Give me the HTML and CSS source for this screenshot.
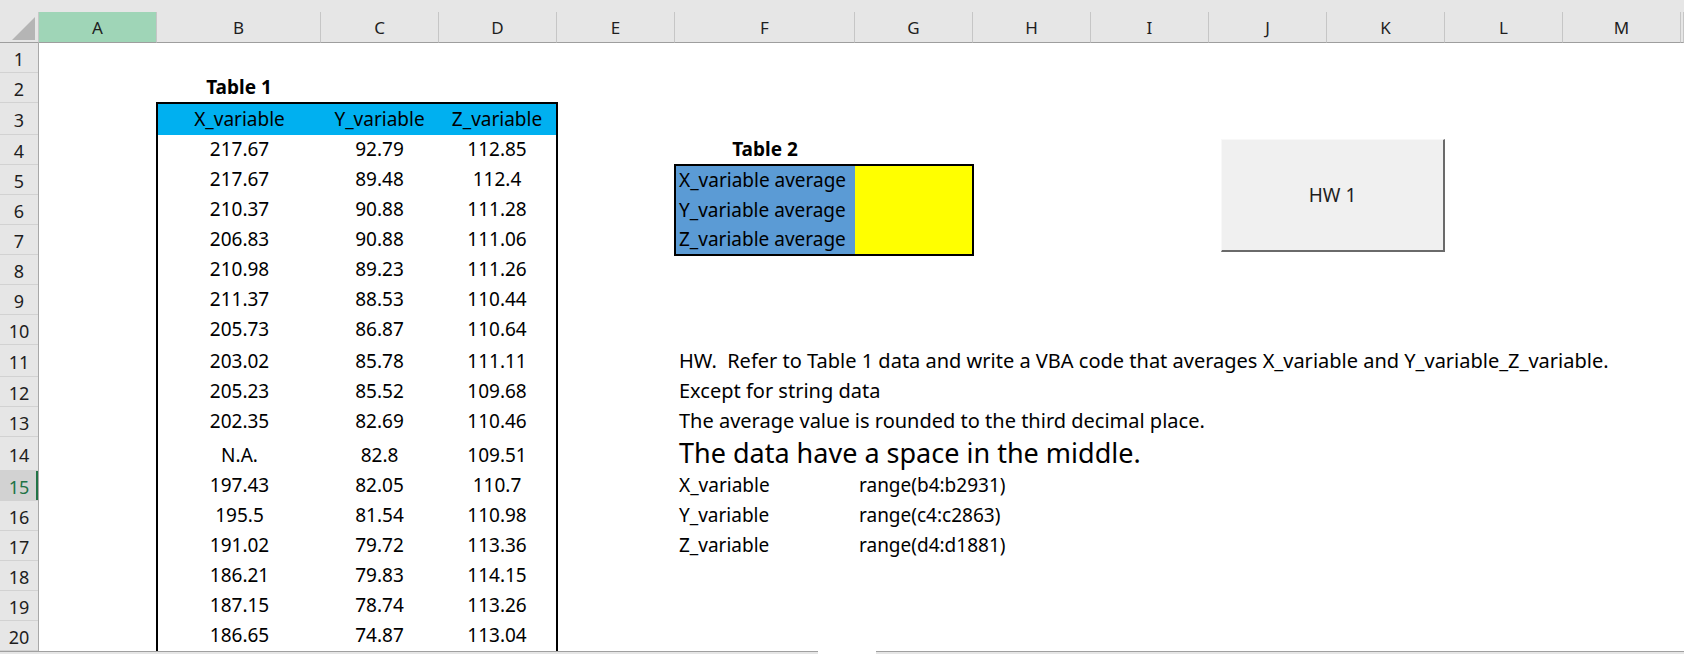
FILE: index.html
```html
<!DOCTYPE html>
<html>
<head>
<meta charset="utf-8">
<link rel="stylesheet" href="styles.css">
</head>
<body>
<div class="app">
  <div class="topband"></div>
  <div class="sheet">
    <div class="corner">
      <svg width="38" height="30" viewBox="0 0 38 30"><polygon points="12,28 35,5 35,28" fill="#b5b5b5"/></svg>
    </div>
    <div class="colheads">
      <div class="ch sel">A</div>
      <div class="ch">B</div>
      <div class="ch">C</div>
      <div class="ch">D</div>
      <div class="ch">E</div>
      <div class="ch">F</div>
      <div class="ch">G</div>
      <div class="ch">H</div>
      <div class="ch">I</div>
      <div class="ch">J</div>
      <div class="ch">K</div>
      <div class="ch">L</div>
      <div class="ch">M</div>
      <div class="ch"></div>
    </div>
    <div class="rowheads">
      <div class="rh">1</div>
      <div class="rh">2</div>
      <div class="rh">3</div>
      <div class="rh">4</div>
      <div class="rh">5</div>
      <div class="rh">6</div>
      <div class="rh">7</div>
      <div class="rh">8</div>
      <div class="rh">9</div>
      <div class="rh">10</div>
      <div class="rh">11</div>
      <div class="rh">12</div>
      <div class="rh">13</div>
      <div class="rh">14</div>
      <div class="rh sel">15</div>
      <div class="rh">16</div>
      <div class="rh">17</div>
      <div class="rh">18</div>
      <div class="rh">19</div>
      <div class="rh">20</div>
    </div>
    <div class="cells">
      <div class="txt bold center t1-title">Table 1</div>
      <div class="t1">
        <div class="txt center hd">X_variable</div><div class="txt center hd">Y_variable</div><div class="txt center hd">Z_variable</div>
        <div class="txt center">217.67</div><div class="txt center">92.79</div><div class="txt center">112.85</div>
        <div class="txt center">217.67</div><div class="txt center">89.48</div><div class="txt center">112.4</div>
        <div class="txt center">210.37</div><div class="txt center">90.88</div><div class="txt center">111.28</div>
        <div class="txt center">206.83</div><div class="txt center">90.88</div><div class="txt center">111.06</div>
        <div class="txt center">210.98</div><div class="txt center">89.23</div><div class="txt center">111.26</div>
        <div class="txt center">211.37</div><div class="txt center">88.53</div><div class="txt center">110.44</div>
        <div class="txt center">205.73</div><div class="txt center">86.87</div><div class="txt center">110.64</div>
        <div class="txt center">203.02</div><div class="txt center">85.78</div><div class="txt center">111.11</div>
        <div class="txt center">205.23</div><div class="txt center">85.52</div><div class="txt center">109.68</div>
        <div class="txt center">202.35</div><div class="txt center">82.69</div><div class="txt center">110.46</div>
        <div class="txt center">N.A.</div><div class="txt center">82.8</div><div class="txt center">109.51</div>
        <div class="txt center">197.43</div><div class="txt center">82.05</div><div class="txt center">110.7</div>
        <div class="txt center">195.5</div><div class="txt center">81.54</div><div class="txt center">110.98</div>
        <div class="txt center">191.02</div><div class="txt center">79.72</div><div class="txt center">113.36</div>
        <div class="txt center">186.21</div><div class="txt center">79.83</div><div class="txt center">114.15</div>
        <div class="txt center">187.15</div><div class="txt center">78.74</div><div class="txt center">113.26</div>
        <div class="txt center">186.65</div><div class="txt center">74.87</div><div class="txt center">113.04</div>
      </div>
      <div class="txt bold center t2-title">Table 2</div>
      <div class="t2">
        <div class="txt lbl">X_variable average</div><div class="val"></div>
        <div class="txt lbl">Y_variable average</div><div class="val"></div>
        <div class="txt lbl">Z_variable average</div><div class="val"></div>
      </div>
      <div class="txt note n11">HW.  Refer to Table 1 data and write a VBA code that averages X_variable and Y_variable_Z_variable.</div>
      <div class="txt note n12">Except for string data</div>
      <div class="txt note n13">The average value is rounded to the third decimal place.</div>
      <div class="txt note big n14">The data have a space in the middle.</div>
      <div class="txt var r15">X_variable</div><div class="txt rng r15">range(b4:b2931)</div>
      <div class="txt var r16">Y_variable</div><div class="txt rng r16">range(c4:c2863)</div>
      <div class="txt var r17">Z_variable</div><div class="txt rng r17">range(d4:d1881)</div>
      <div class="btn">HW 1</div>
    </div>
  </div>
  <div class="bottombar">
    <div class="seg seg1"></div>
    <div class="gap"></div>
    <div class="seg seg2"></div>
  </div>
</div>
</body>
</html>
```
FILE: styles.css
```css
:root {
  --cols: 118px 164px 118px 118px 118px 180px 118px 118px 118px 118px 118px 118px 118px 1fr;
  --rows: 30px 30px 32px repeat(7, 30px) 32px 30px 30px 34px repeat(6, 30px);
}
* { box-sizing: border-box; }
body {
  margin: 0;
  width: 1684px;
  height: 654px;
  overflow: hidden;
  background: #fff;
  font-family: "Noto Sans", "Liberation Sans", sans-serif;
  color: #000;
}
.topband { height: 12px; background: #e6e6e6; }
.sheet {
  display: grid;
  grid-template-columns: 39px 1fr;
  grid-template-rows: 31px 608px;
}
.corner {
  background: #e6e6e6;
  border-bottom: 1px solid #9e9e9e;
  border-right: 1px solid #c8c8c8;
}
.corner svg { display: block; }
.colheads {
  display: grid;
  grid-template-columns: var(--cols);
}
.ch {
  background: #e6e6e6;
  border-right: 1px solid #c6c6c6;
  border-bottom: 1px solid #9e9e9e;
  display: flex;
  align-items: center;
  justify-content: center;
  font-size: 17px;
  color: #1e1e1e;
  padding-top: 1px;
}
.ch.sel { background: #9fd5b7; }
.rowheads {
  display: grid;
  grid-template-rows: var(--rows);
  background: #e6e6e6;
  border-right: 1px solid #a8a8a8;
}
.rh {
  border-bottom: 1px solid #d2d2d2;
  display: flex;
  align-items: center;
  justify-content: center;
  font-size: 18px;
  color: #1e1e1e;
  padding-top: 2px;
}
.rh.sel {
  background: #d2d2d2;
  color: #217346;
  box-shadow: inset -2px 0 0 #217346;
}
.cells {
  position: relative;
  overflow: hidden;
  display: grid;
  grid-template-columns: var(--cols);
  grid-template-rows: var(--rows);
  font-size: 19px;
}
.txt {
  align-self: end;
  line-height: 24px;
  padding: 0 0 4px 4px;
  white-space: pre;
}
.center { text-align: center; padding-left: 0; }
.bold { font-weight: 700; }
.t1-title { grid-column: 2; grid-row: 2; }
.t1 {
  grid-column: 2 / 5;
  grid-row: 3 / 21;
  margin: -1px -1px 0 -1px;
  border: 2px solid #000;
  border-bottom: none;
  display: grid;
  grid-template-columns: 163px 117px 118px;
  grid-template-rows: 31px repeat(7, 30px) 32px 30px 30px 34px repeat(6, 30px);
}
.t1 .txt { align-self: stretch; display: flex; align-items: flex-end; justify-content: center; }
.t1 .hd { background: #00b0f0; }
.t2-title { grid-column: 6; grid-row: 4; }
.t2 {
  grid-column: 6 / 8;
  grid-row: 5 / 8;
  margin: -1px;
  border: 2px solid #000;
  display: grid;
  grid-template-columns: 179px 117px;
  grid-template-rows: 29px 30px 29px;
}
.t2 .lbl {
  background: #5b9bd5;
  align-self: stretch;
  display: flex;
  align-items: flex-end;
  padding-left: 3px;
  padding-bottom: 3px;
}
.t2 .val { background: #ffff00; }
.note { grid-column: 6 / -1; font-size: 20px; }
.n11 { grid-row: 11; }
.n12 { grid-row: 12; }
.n13 { grid-row: 13; }
.n14 { grid-row: 14; }
.big {
  font-size: 27px;
  line-height: 32px;
  padding-bottom: 2px;
}
.var { grid-column: 6; }
.rng { grid-column: 7 / 10; }
.r15 { grid-row: 15; }
.r16 { grid-row: 16; }
.r17 { grid-row: 17; }
.btn {
  position: absolute;
  left: 1182px;
  top: 96px;
  width: 224px;
  height: 113px;
  background: #f0f0f0;
  border-top: 1px solid #f8f8f8;
  border-left: 1px solid #f8f8f8;
  border-right: 2px solid #6a6a6a;
  border-bottom: 2px solid #6a6a6a;
  display: flex;
  align-items: center;
  justify-content: center;
  font-size: 19px;
  color: #1e1e1e;
}
.bottombar { display: flex; height: 3px; }
.seg { border-top: 1px solid #a0a0a0; background: #e6e6e6; }
.seg1 { width: 818px; }
.gap { width: 58px; background: #fff; }
.seg2 { flex: 1; }
```
